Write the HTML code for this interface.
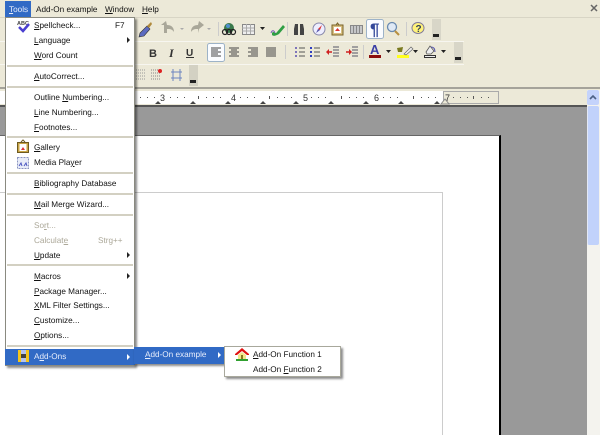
<!DOCTYPE html>
<html><head><meta charset="utf-8"><style>
html,body{margin:0;padding:0}
body{width:600px;height:435px;overflow:hidden;position:relative;background:#fff;font-family:"Liberation Sans",sans-serif;font-size:8.2px;color:#111}
#w{position:absolute;left:0;top:0;width:600px;height:435px;overflow:hidden;filter:blur(.3px)}
.a{position:absolute}
.t{position:absolute;white-space:nowrap;line-height:13px;height:13px;text-rendering:geometricPrecision}
u{text-decoration-thickness:1px;text-underline-offset:1px}
.s{position:absolute;left:7px;width:126px;height:2px;background:#d3d0c2}
.d{color:#aca899}
.ar{position:absolute;width:0;height:0;border-left:3px solid #222;border-top:3px solid transparent;border-bottom:3px solid transparent}
</style></head><body><div id="w">
<!-- background -->
<div class="a" style="left:0;top:0;width:600px;height:90px;background:#ece9d8"></div>
<div class="a" style="left:0;top:17px;width:600px;height:1px;background:#d8d5c5"></div>
<div class="a" style="left:0;top:87px;width:600px;height:2px;background:#a5a39a"></div>
<div class="a" style="left:0;top:89px;width:587px;height:17px;background:#ece9d8"></div>
<div class="a" style="left:0;top:105px;width:587px;height:2px;background:#555"></div>
<div class="a" style="left:0;top:107px;width:587px;height:328px;background:#999"></div>
<!-- page -->
<div class="a" style="left:0;top:135px;width:501px;height:300px;background:#fff;border-top:1px solid #666;box-sizing:border-box;border-right:2px solid #000"></div>
<div class="a" style="left:0;top:192px;width:443px;height:243px;border-top:1px solid #ccc;border-right:1px solid #ccc;box-sizing:border-box"></div>
<!-- scrollbar -->
<div class="a" style="left:587px;top:90px;width:13px;height:345px;background:#f4f3ee"></div>
<div class="a" style="left:587px;top:90px;width:12px;height:15px;background:#c4d3fb;border-radius:2px"></div>
<svg class="a" style="left:587px;top:90px" width="12" height="15"><path d="M3 9l3-3 3 3" fill="none" stroke="#4d6185" stroke-width="1.6"/></svg>
<div class="a" style="left:587px;top:106px;width:12px;height:139px;background:#c1d2fb;border-radius:2px;border-left:1px solid #e3e8f5;box-sizing:border-box"></div>
<!-- ruler -->
<div class="a" style="left:0;top:91px;width:498px;height:13px;background:#fff"></div>
<div class="a" style="left:443px;top:91px;width:56px;height:13px;background:#ece9d8;border:1px solid #aaa;box-sizing:border-box"></div>
<svg class="a" style="left:130px;top:91px" width="370" height="14" font-family="Liberation Sans" font-size="9" fill="#333">
<g fill="#555"><rect x="3" y="6" width="1" height="1"/><rect x="10" y="6" width="1" height="1"/><rect x="17" y="6" width="1" height="1"/><rect x="24" y="6" width="1" height="1"/><rect x="40" y="6" width="1" height="1"/><rect x="47" y="6" width="1" height="1"/><rect x="54" y="6" width="1" height="1"/><rect x="68" y="5" width="1" height="3"/><rect x="76" y="6" width="1" height="1"/><rect x="83" y="6" width="1" height="1"/><rect x="90" y="6" width="1" height="1"/><rect x="110" y="6" width="1" height="1"/><rect x="117" y="6" width="1" height="1"/><rect x="124" y="6" width="1" height="1"/><rect x="139" y="5" width="1" height="3"/><rect x="147" y="6" width="1" height="1"/><rect x="154" y="6" width="1" height="1"/><rect x="161" y="6" width="1" height="1"/><rect x="181" y="6" width="1" height="1"/><rect x="188" y="6" width="1" height="1"/><rect x="195" y="6" width="1" height="1"/><rect x="211" y="5" width="1" height="3"/><rect x="219" y="6" width="1" height="1"/><rect x="226" y="6" width="1" height="1"/><rect x="233" y="6" width="1" height="1"/><rect x="253" y="6" width="1" height="1"/><rect x="260" y="6" width="1" height="1"/><rect x="267" y="6" width="1" height="1"/><rect x="283" y="5" width="1" height="3"/><rect x="291" y="6" width="1" height="1"/><rect x="298" y="6" width="1" height="1"/><rect x="305" y="6" width="1" height="1"/><rect x="323" y="6" width="1" height="1"/><rect x="330" y="6" width="1" height="1"/><rect x="337" y="6" width="1" height="1"/><rect x="343" y="5" width="1" height="3"/><rect x="351" y="6" width="1" height="1"/><rect x="358" y="6" width="1" height="1"/></g>
<text x="30" y="10">3</text><text x="101" y="10">4</text><text x="173" y="10">5</text><text x="244" y="10">6</text><text x="315" y="10">7</text>
<g fill="#444"><path d="M25 13l3-3 3 3zM60 13l3-3 3 3zM95 13l3-3 3 3zM130 13l3-3 3 3zM163 13l3-3 3 3zM198 13l3-3 3 3zM233 13l3-3 3 3zM268 13l3-3 3 3zM304 13l3-3 3 3z"/></g>
<path d="M311 13l4-5 4 5z" fill="#ece9d8" stroke="#888"/>
</svg>
<!-- toolbar grips -->
<div class="a" style="left:432px;top:19px;width:9px;height:21px;background:#d8d6c8"></div>
<div class="a" style="left:433px;top:34px;width:6px;height:3px;background:#222"></div>
<div class="a" style="left:454px;top:42px;width:9px;height:21px;background:#d8d6c8"></div>
<div class="a" style="left:455px;top:57px;width:6px;height:3px;background:#222"></div>
<div class="a" style="left:189px;top:65px;width:9px;height:21px;background:#d3d1c3"></div>
<div class="a" style="left:190px;top:80px;width:6px;height:3px;background:#222"></div>
<div class="a" style="left:0;top:41px;width:464px;height:1px;background:#f7f6f0"></div>
<div class="a" style="left:0;top:64px;width:464px;height:1px;background:#f7f6f0"></div>
<!-- icons -->
<svg class="a" style="left:0;top:0" width="600" height="90">
<path d="M140 33l7-7 3 3-6 7-5 1z" fill="#5c6bc0" stroke="#333" stroke-width=".6"/><path d="M147 26l4-4 1 2-3 4z" fill="#b08a3c"/>
<path d="M164 33v-8l-3 0 5-4 1 4c4 0 7 2 7 7-2-3-4-3-7-3v4z" fill="#a9a799"/><path d="M180 28h4l-2 2z" fill="#aaa"/>
<path d="M198 33v-4c-3 0-5 0-7 3 0-5 3-7 7-7l1-4 5 4-5 4z" fill="#a9a799"/><path d="M207 28h4l-2 2z" fill="#aaa"/>
<rect x="218" y="22" width="1" height="14" fill="#ccc"/>
<circle cx="229" cy="28" r="5" fill="#3a7a4c"/><circle cx="228" cy="26" r="2" fill="#5090d0"/><circle cx="225" cy="32" r="2.5" fill="none" stroke="#222" stroke-width="1.2"/><circle cx="229" cy="32" r="2.5" fill="none" stroke="#222" stroke-width="1.2"/><circle cx="233" cy="32" r="2.5" fill="none" stroke="#222" stroke-width="1.2"/>
<rect x="242.500" y="24.500" width="12" height="10" fill="#eee" stroke="#888"/><path d="M242 28h12M242 31h12M246.500 24v10M250.500 24v10" stroke="#aaa"/><path d="M260 27h5l-2.500 3z" fill="#222"/>
<path d="M272 33c2-3 3 2 5-1l6-7 2 2-6 7c-2 1-5 3-7 1z" fill="#2f9e44"/><path d="M271 33c1-3 3-3 4 0" stroke="#7a5bb5" fill="none"/>
<rect x="287" y="22" width="1" height="14" fill="#ccc"/>
<path d="M295 24h3v11h-4v-6zM300 24h3l1 5v6h-4z" fill="#444"/>
<circle cx="319" cy="29" r="6" fill="#eef" stroke="#88a"/><path d="M322 25l-2 5-2-1z" fill="#d33"/><path d="M316 33l2-4 2 1z" fill="#55a"/>
<rect x="332" y="25" width="11" height="10" fill="#d8bf7f" stroke="#7a6328"/><rect x="334" y="27" width="7" height="6" fill="#fff"/><path d="M335 31l2.500-3 2.500 3z" fill="#d33"/><path d="M336 25l1.500-2 1.500 2" fill="none" stroke="#7a6328"/>
<rect x="350.500" y="25.500" width="12" height="8" fill="#c5c6c8" stroke="#888"/><path d="M353.500 25v9M356.500 25v9M359.500 25v9" stroke="#888"/>
<rect x="366.500" y="19.500" width="17" height="19" rx="2" fill="#fafcff" stroke="#9db3c8"/>
<text x="370" y="35" font-family="Liberation Sans" font-size="17" font-weight="bold" fill="#34489a">¶</text>
<circle cx="392" cy="27" r="4.500" fill="#dfe9f5" stroke="#6a8ab0" stroke-width="1.300"/><path d="M395 31l4 4" stroke="#b89040" stroke-width="2"/>
<rect x="406" y="22" width="1" height="14" fill="#ccc"/>
<ellipse cx="418" cy="28" rx="6" ry="5.500" fill="#fff27a" stroke="#807a9a"/><text x="415.500" y="32" font-family="Liberation Sans" font-size="10" font-weight="bold" fill="#345">?</text>
<!-- row 2 -->
<text x="149" y="57" font-family="Liberation Sans" font-size="11" font-weight="bold" fill="#333">B</text>
<text x="169" y="57" font-family="Liberation Serif" font-size="12" font-weight="bold" font-style="italic" fill="#333">I</text>
<text x="186" y="56" font-family="Liberation Sans" font-size="10" font-weight="bold" fill="#333">U</text><rect x="186" y="57" width="8" height="1" fill="#333"/>
<rect x="207.500" y="43.500" width="17" height="18" rx="2" fill="#fafcff" stroke="#9db3c8"/>
<path d="M211 48h10M211 50h7M211 52h10M211 54h7M211 56h10" stroke="#444"/>
<path d="M229 48h10M231 50h6M229 52h10M231 54h6M229 56h10" stroke="#444"/>
<path d="M248 48h10M251 50h7M248 52h10M251 54h7M248 56h10" stroke="#444"/>
<path d="M266 48h10M266 50h10M266 52h10M266 54h10M266 56h10" stroke="#444"/>
<rect x="285" y="45" width="1" height="14" fill="#ccc"/>
<path d="M295 48h2M295 52h2M295 56h2" stroke="#5a4fb0" stroke-width="1.500"/><path d="M299 48h6M299 52h6M299 56h6" stroke="#555"/>
<path d="M310 48h2M310 52h2M310 56h2" stroke="#3040c0" stroke-width="2"/><path d="M314 48h6M314 52h6M314 56h6" stroke="#555"/>
<path d="M327 52h5" stroke="#d02020" stroke-width="1.500"/><path d="M329 49l-3 3 3 3" fill="#d02020"/><path d="M333 47h6M333 50h6M333 53h6M333 56h6" stroke="#556"/>
<path d="M346 52h5" stroke="#d02020" stroke-width="1.500"/><path d="M349 49l3 3-3 3" fill="#d02020"/><path d="M352 47h6M352 50h6M352 53h6M352 56h6" stroke="#556"/>
<rect x="363" y="45" width="1" height="14" fill="#ccc"/>
<text x="370" y="54" font-family="Liberation Sans" font-size="13" font-weight="bold" fill="#3b3fa6">A</text><rect x="369" y="55" width="12" height="3" fill="#8b0d0d"/>
<path d="M386 50h5l-2.500 3z" fill="#222"/>
<rect x="397" y="55" width="12" height="3" fill="#ffff20"/><path d="M404 54l7-7 2 2-7 6z" fill="#eee" stroke="#666" stroke-width=".7"/><path d="M397 48l6-1-1 5-4 0z" fill="#7a7a20"/>
<path d="M413 50h5l-2.500 3z" fill="#222"/>
<rect x="424.500" y="55.500" width="11" height="2" fill="#eee" stroke="#333"/><path d="M426 52l4-6 4 5-3 3-4 0z" fill="#eee" stroke="#555" stroke-width=".8"/><path d="M431 47c3 0 4 2 4 5" stroke="#55a" fill="none"/>
<path d="M441 50h5l-2.500 3z" fill="#222"/>
<!-- row 3 -->
<path d="M136 70h10M136 73h10M136 76h10M136 79h10" stroke="#999" stroke-dasharray="1 1"/>
<path d="M151 70h10M151 73h10M151 76h10M151 79h10" stroke="#888" stroke-dasharray="1 1"/><circle cx="160" cy="71" r="2" fill="#d22"/>
<path d="M171 72h11M171 78h11M173 69v12M180 69v12" stroke="#6d85c0" stroke-width="1"/>
</svg>
<!-- menubar -->
<div class="a" style="left:5px;top:1px;width:26px;height:16px;background:#316ac5"></div>
<div class="t" style="left:9px;top:3px;color:#e8eefc"><u>T</u>ools</div>
<div class="t" style="left:36px;top:3px">Add-On example</div>
<div class="t" style="left:105px;top:3px"><u>W</u>indow</div>
<div class="t" style="left:142px;top:3px"><u>H</u>elp</div>
<svg class="a" style="left:590px;top:4px" width="8" height="8"><path d="M1 1l6 6M7 1l-6 6" stroke="#666" stroke-width="1.500"/></svg>
<!-- main menu -->
<div class="a" style="left:5px;top:17px;width:130px;height:349px;background:#fff;border:1px solid #8a8a80;box-sizing:border-box;box-shadow:2px 2px 2px rgba(0,0,0,.45)"></div>
<div class="t" style="left:34px;top:19px"><u>S</u>pellcheck...</div><div class="t" style="left:115px;top:19px">F7</div>
<div class="t" style="left:34px;top:34px"><u>L</u>anguage</div><div class="ar" style="left:127px;top:37px"></div>
<div class="t" style="left:34px;top:49px"><u>W</u>ord Count</div>
<div class="s" style="top:65px"></div>
<div class="t" style="left:34px;top:70px"><u>A</u>utoCorrect...</div>
<div class="s" style="top:86px"></div>
<div class="t" style="left:34px;top:91px">Outline <u>N</u>umbering...</div>
<div class="t" style="left:34px;top:106px"><u>L</u>ine Numbering...</div>
<div class="t" style="left:34px;top:121px"><u>F</u>ootnotes...</div>
<div class="s" style="top:136px"></div>
<div class="t" style="left:34px;top:141px"><u>G</u>allery</div>
<div class="t" style="left:34px;top:156px">Media Pla<u>y</u>er</div>
<div class="s" style="top:172px"></div>
<div class="t" style="left:34px;top:177px"><u>B</u>ibliography Database</div>
<div class="s" style="top:193px"></div>
<div class="t" style="left:34px;top:198px"><u>M</u>ail Merge Wizard...</div>
<div class="s" style="top:214px"></div>
<div class="t d" style="left:34px;top:219px">So<u>r</u>t...</div>
<div class="t d" style="left:34px;top:234px">Calculat<u>e</u></div><div class="t d" style="left:98px;top:234px">Strg++</div>
<div class="t" style="left:34px;top:249px"><u>U</u>pdate</div><div class="ar" style="left:127px;top:252px"></div>
<div class="s" style="top:264px"></div>
<div class="t" style="left:34px;top:270px"><u>M</u>acros</div><div class="ar" style="left:127px;top:273px"></div>
<div class="t" style="left:34px;top:285px"><u>P</u>ackage Manager...</div>
<div class="t" style="left:34px;top:299px"><u>X</u>ML Filter Settings...</div>
<div class="t" style="left:34px;top:314px"><u>C</u>ustomize...</div>
<div class="t" style="left:34px;top:329px"><u>O</u>ptions...</div>
<div class="s" style="top:345px"></div>
<div class="a" style="left:5px;top:349px;width:130px;height:16px;background:#316ac5"></div>
<div class="t" style="left:34px;top:350px;color:#e8eefc">A<u>d</u>d-Ons</div>
<div class="ar" style="left:127px;top:354px;border-left-color:#fff"></div>
<!-- menu icons -->
<svg class="a" style="left:14px;top:18px" width="20" height="345">
<text x="3" y="7" font-family="Liberation Sans" font-size="5.500" font-weight="bold" fill="#444">ABC</text>
<path d="M5 9l4 4 6-7" fill="none" stroke="#4a3fd0" stroke-width="2.500"/>
<rect x="3.500" y="124.500" width="11" height="10" fill="#c9a545" stroke="#6e5a20"/><rect x="5.500" y="126" width="7" height="7" fill="#fff"/><path d="M7 132l2-3 2 3z" fill="#d33"/><path d="M7 124l2-2 2 2" fill="none" stroke="#6e5a20"/>
<rect x="3.500" y="139.500" width="11" height="11" fill="#e8ecf8" stroke="#8a94c0" stroke-dasharray="2 1"/><path d="M5 148l2-3 1 3M10 148l2-3 1 3" stroke="#4a55c0" fill="none"/>
<rect x="4" y="332" width="11" height="12" fill="#b5c3ee"/><rect x="4" y="332" width="3" height="12" fill="#f5c518"/><rect x="12" y="332" width="3" height="12" fill="#f5c518"/><rect x="7" y="336" width="5" height="4" fill="#444"/>
</svg>
<!-- submenu 1 -->
<div class="a" style="left:134px;top:347px;width:91px;height:17px;background:#316ac5;box-shadow:1px 2px 2px rgba(0,0,0,.45)"></div>
<div class="t" style="left:145px;top:348px;color:#e8eefc"><u>A</u>dd-On example</div>
<div class="ar" style="left:218px;top:352px;border-left-color:#fff"></div>
<!-- submenu 2 -->
<div class="a" style="left:224px;top:346px;width:117px;height:31px;background:#fff;border:1px solid #a8a89c;box-sizing:border-box;box-shadow:2px 2px 2px rgba(0,0,0,.45)"></div>
<svg class="a" style="left:235px;top:347px" width="14" height="14"><path d="M7 1L0 7v1h2l5-4 5 4h2V7z" fill="#e01010"/><path d="M3 8l4-3 4 3v4H3z" fill="#f2e88a"/><rect x="6" y="8" width="2" height="4" fill="#8a7a20"/><rect x="1" y="12" width="12" height="2" fill="#30a030"/></svg>
<div class="t" style="left:253px;top:348px"><u>A</u>dd-On Function 1</div>
<div class="t" style="left:253px;top:363px">Add-On <u>F</u>unction 2</div>
</div></body></html>
